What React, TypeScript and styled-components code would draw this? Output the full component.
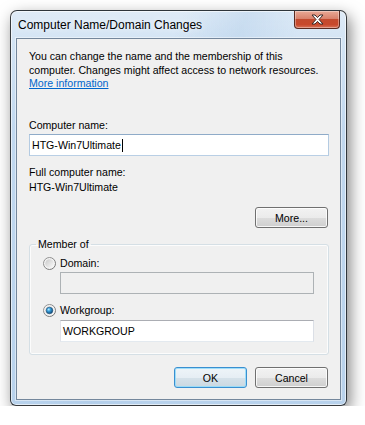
import styled, { createGlobalStyle } from "styled-components";

const GlobalStyle = createGlobalStyle`
  html, body {
    margin: 0;
    background: #fff;
  }
  body {
    font-family: "Liberation Sans", Arial, sans-serif;
    color: #000;
  }
  * {
    box-sizing: border-box;
  }
`;

const Window = styled.div`
  margin: 10px 0 0 10px;
  width: 337px;
  height: 396px;
  display: flex;
  flex-direction: column;
  padding: 0 5px 5px;
  border: 1px solid rgba(0, 0, 0, 0.75);
  border-radius: 7px 7px 6px 6px;
  background:
    linear-gradient(112deg, rgba(255, 255, 255, 0) 35%, rgba(170, 200, 230, 0.35) 48%, rgba(255, 255, 255, 0) 60%),
    linear-gradient(to bottom, #dfebf7 0px, #d3e4f4 30px, #c1d8ef 120px, #b8d2ec 100%);
  box-shadow:
    inset 0 0 0 1px rgba(255, 255, 255, 0.6),
    3px 6px 16px rgba(0, 0, 0, 0.5);
`;

const TitleBar = styled.div`
  height: 27px;
  display: flex;
  justify-content: space-between;
  align-items: flex-start;
`;

const Title = styled.div`
  margin-top: 7px;
  padding-left: 2px;
  font-size: 12px;
  line-height: 14px;
  text-shadow: 0 0 6px rgba(255, 255, 255, 0.95);
`;

const CloseButton = styled.div`
  width: 46px;
  height: 18px;
  margin-right: 1px;
  display: flex;
  align-items: center;
  justify-content: center;
  border: 1px solid #5a2a20;
  border-top: none;
  border-radius: 0 0 4px 4px;
  background: linear-gradient(
    to bottom,
    #e9a996 0%,
    #d9826c 45%,
    #c34a2e 50%,
    #c8492c 80%,
    #d8735a 100%
  );
  box-shadow: inset 0 0 0 1px rgba(255, 255, 255, 0.35);
`;

const Client = styled.div`
  flex: 1;
  display: flex;
  flex-direction: column;
  padding: 11px 11px 0 12px;
  background: #f0f0f0;
  border: 1px solid #74879c;
  box-shadow: 0 0 0 1px rgba(255, 255, 255, 0.45);
  font-size: 10.6px;
`;

const Para = styled.p`
  margin: 0;
  line-height: 13.5px;
`;

const Link = styled.span`
  color: #0066cc;
  text-decoration: underline;
`;

const Label = styled.div<{ $mt: number }>`
  margin-top: ${(p) => p.$mt}px;
  line-height: 14px;
  white-space: nowrap;
`;

const TextBox = styled.div<{ $mt: number; $indent?: number; $kind?: "focus" | "disabled" }>`
  margin-top: ${(p) => p.$mt}px;
  margin-left: ${(p) => p.$indent ?? 0}px;
  height: 22px;
  display: flex;
  align-items: center;
  padding-left: 2px;
  white-space: nowrap;
  border: 1px solid;
  ${(p) =>
    p.$kind === "focus"
      ? `border-color: #8fabc8 #b4cbe2 #b9cfe5 #b4cbe2; background: #fff;`
      : p.$kind === "disabled"
      ? `border-color: #adb2b5; background: #f0f0f0;`
      : `border-color: #abadb3 #dbdfe6 #e3e9ef #e2e3ea; background: #fff;`}
`;

const Caret = styled.span`
  display: inline-block;
  width: 1px;
  height: 13px;
  margin-left: 1px;
  background: #000;
`;

const ButtonRow = styled.div<{ $mt: number }>`
  margin-top: ${(p) => p.$mt}px;
  display: flex;
  justify-content: flex-end;
  gap: 8px;
  padding-right: 1px;
`;

const PushButton = styled.div<{ $default?: boolean }>`
  width: 73px;
  height: 21px;
  display: flex;
  align-items: center;
  justify-content: center;
  border-radius: 3px;
  border: 1px solid ${(p) => (p.$default ? "#3a8fd0" : "#707070")};
  background: ${(p) =>
    p.$default
      ? "linear-gradient(to bottom, #eef4f8 0%, #e6eef4 50%, #d6e2ea 50%, #cbd8e1 100%)"
      : "linear-gradient(to bottom, #f2f2f2 0%, #ebebeb 50%, #dddddd 50%, #cfcfcf 100%)"};
  box-shadow: inset 0 0 0 1px
    ${(p) => (p.$default ? "rgba(150, 220, 250, 0.9)" : "rgba(255, 255, 255, 0.8)")};
`;

const Group = styled.fieldset`
  margin: 9px 0 0;
  padding: 5px 14px 12px 13px;
  min-width: 0;
  border: 1px solid #d5dfe5;
  border-radius: 3px;
  box-shadow: inset 0 0 0 1px rgba(255, 255, 255, 0.8);
`;

const Legend = styled.legend`
  margin-left: -7px;
  padding: 0 2px;
  line-height: 14px;
`;

const RadioRow = styled.div<{ $mt?: number }>`
  margin-top: ${(p) => p.$mt ?? 0}px;
  height: 14px;
  display: flex;
  align-items: center;
  gap: 4px;
`;

const Radio = ({ checked }: { checked?: boolean }) => (
  <svg width="13" height="13" viewBox="0 0 13 13">
    <defs>
      <linearGradient id="rOuter" x1="0" y1="0" x2="1" y2="1">
        <stop offset="0" stopColor="#9a9a9a" />
        <stop offset="1" stopColor="#6f6f6f" />
      </linearGradient>
      <linearGradient id="rInner" x1="0" y1="0" x2="1" y2="1">
        <stop offset="0" stopColor="#c9c9c9" />
        <stop offset="1" stopColor="#fbfbfb" />
      </linearGradient>
      <radialGradient id="rDot" cx="0.38" cy="0.35" r="0.7">
        <stop offset="0" stopColor="#bdeeff" />
        <stop offset="0.35" stopColor="#3aa3e0" />
        <stop offset="1" stopColor="#0b3f6b" />
      </radialGradient>
    </defs>
    <circle cx="6.5" cy="6.5" r="6" fill="#f4f4f4" stroke="url(#rOuter)" />
    <circle cx="6.5" cy="6.5" r="4.3" fill="url(#rInner)" />
    {checked && <circle cx="6.5" cy="6.5" r="3.3" fill="url(#rDot)" stroke="#1d4f78" strokeWidth="0.6" />}
  </svg>
);

const CloseGlyph = () => (
  <svg width="13" height="11" viewBox="-1 -1 13 11">
    <polygon
      points="0,0 3,0 5.5,2.6 8,0 11,0 7,4.5 11,9 8,9 5.5,6.4 3,9 0,9 4,4.5"
      fill="#fff"
      stroke="#3b2b28"
      strokeWidth="1"
      strokeLinejoin="round"
    />
  </svg>
);

export default function App() {
  return (
    <>
      <GlobalStyle />
      <Window>
        <TitleBar>
          <Title>Computer Name/Domain Changes</Title>
          <CloseButton>
            <CloseGlyph />
          </CloseButton>
        </TitleBar>
        <Client>
          <Para>
            You can change the name and the membership of this
            <br />
            computer. Changes might affect access to network resources.
            <br />
            <Link>More information</Link>
          </Para>

          <Label $mt={27.5}>Computer name:</Label>
          <TextBox $mt={2} $kind="focus">
            HTG-Win7Ultimate
            <Caret />
          </TextBox>

          <Label $mt={9}>Full computer name:</Label>
          <Label $mt={1}>HTG-Win7Ultimate</Label>

          <ButtonRow $mt={13}>
            <PushButton>More...</PushButton>
          </ButtonRow>

          <Group>
            <Legend>Member of</Legend>
            <RadioRow>
              <Radio />
              Domain:
            </RadioRow>
            <TextBox $mt={2} $indent={17} $kind="disabled" />
            <RadioRow $mt={9}>
              <Radio checked />
              Workgroup:
            </RadioRow>
            <TextBox $mt={3} $indent={17}>
              WORKGROUP
            </TextBox>
          </Group>

          <ButtonRow $mt={12}>
            <PushButton $default>OK</PushButton>
            <PushButton>Cancel</PushButton>
          </ButtonRow>
        </Client>
      </Window>
    </>
  );
}
